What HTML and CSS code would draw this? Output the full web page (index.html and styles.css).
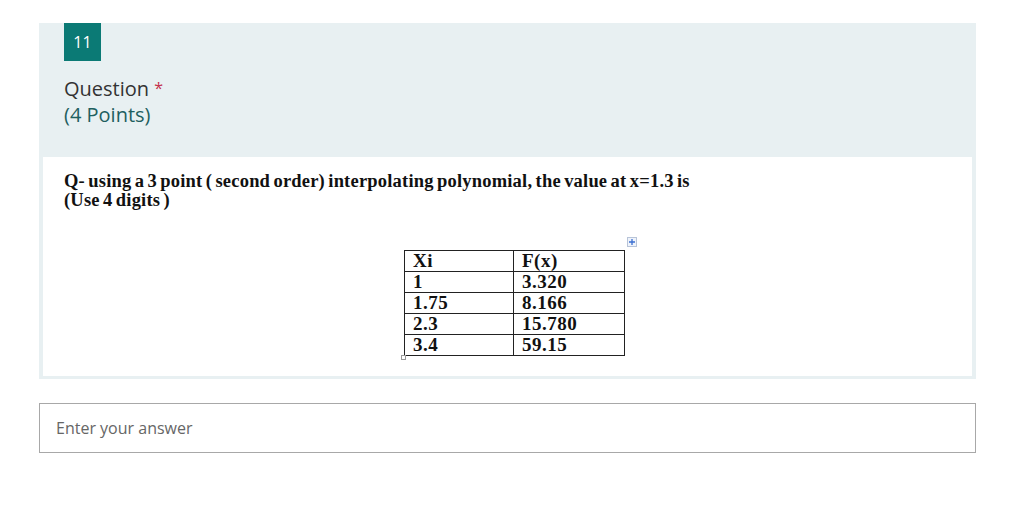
FILE: index.html
```html
<!DOCTYPE html>
<html>
<head>
<meta charset="utf-8">
<link rel="stylesheet" href="styles.css">
</head>
<body>
<div class="page">
  <div class="card">
    <div class="badge">11</div>
    <div class="title">Question <span class="req">*</span></div>
    <div class="points">(4 Points)</div>
    <div class="doc">
      <div class="qtext">
        <div>Q- using a 3 point ( second order) interpolating polynomial, the value at x=1.3 is</div>
        <div>(Use 4 digits )</div>
      </div>
      <div class="tablewrap">
        <div class="tableholder">
          <span class="move">
            <svg width="10" height="10" viewBox="0 0 10 10"><rect x="0.5" y="0.5" width="9" height="9" fill="#eef3fb" stroke="#b8c4d8"/><path d="M5 2v6M2 5h6" stroke="#3b6fd1" stroke-width="1.3"/></svg>
          </span>
          <table class="data">
            <tr><td class="c1">Xi</td><td>F(x)</td></tr>
            <tr><td class="c1">1</td><td>3.320</td></tr>
            <tr><td class="c1">1.75</td><td>8.166</td></tr>
            <tr><td class="c1">2.3</td><td>15.780</td></tr>
            <tr><td class="c1">3.4</td><td>59.15</td></tr>
          </table>
          <span class="resize"></span>
        </div>
      </div>
    </div>
  </div>
  <div class="answer">Enter your answer</div>
</div>
</body>
</html>
```

FILE: styles.css
```css
html, body { margin: 0; padding: 0; background: #fff; }
body { font-family: "Open Sans", "Noto Sans", sans-serif; }
.page { padding: 23px 36px 0 39px; }
.card {
  background: #e8f0f2;
  padding: 0 4px 3px 4px;
}
.badge {
  margin-left: 21px;
  width: 37px;
  height: 38px;
  background: #0b7a75;
  color: #fff;
  font-size: 16px;
  display: flex;
  align-items: center;
  justify-content: center;
}
.title {
  margin: 14px 0 0 21px;
  font-size: 20px;
  color: #333;
  line-height: 27px;
}
.req { color: #c4314b; font-size: 16px; vertical-align: top; }
.points {
  margin-left: 21px;
  font-size: 20px;
  color: #1f5f60;
  line-height: 26px;
}
.doc {
  margin-top: 29px;
  background: #fff;
  height: 219px;
  padding: 15px 0 0 21px;
  box-sizing: border-box;
}
.qtext {
  font-family: "Liberation Serif", serif;
  font-weight: bold;
  font-size: 18.5px;
  line-height: 19px;
  color: #111;
  letter-spacing: 0.2px;
  word-spacing: -1.5px;
}
.tablewrap {
  margin-top: 40px;
  padding-left: 340px;
}
.tableholder { position: relative; display: inline-block; }
.move { position: absolute; right: -12px; top: -13px; line-height: 0; }
.resize {
  position: absolute; left: -3px; bottom: -4px;
  width: 3px; height: 3px; border: 1px solid #999; background: #fff;
}
.data {
  border-collapse: collapse;
  font-family: "Liberation Serif", serif;
  font-weight: bold;
  font-size: 19px;
  letter-spacing: 0.5px;
  color: #111;
}
.data td {
  border: 1.5px solid #222;
  height: 21px;
  line-height: 18px;
  padding: 0 0 1px 8px;
  width: 111px;
  box-sizing: border-box;
  vertical-align: bottom;
}
.data td.c1 { width: 109px; }
.answer {
  margin-top: 24px;
  height: 50px;
  border: 1px solid #a8a8a8;
  box-sizing: border-box;
  padding-left: 16px;
  display: flex;
  align-items: center;
  font-size: 16px;
  color: #666;
}
```
